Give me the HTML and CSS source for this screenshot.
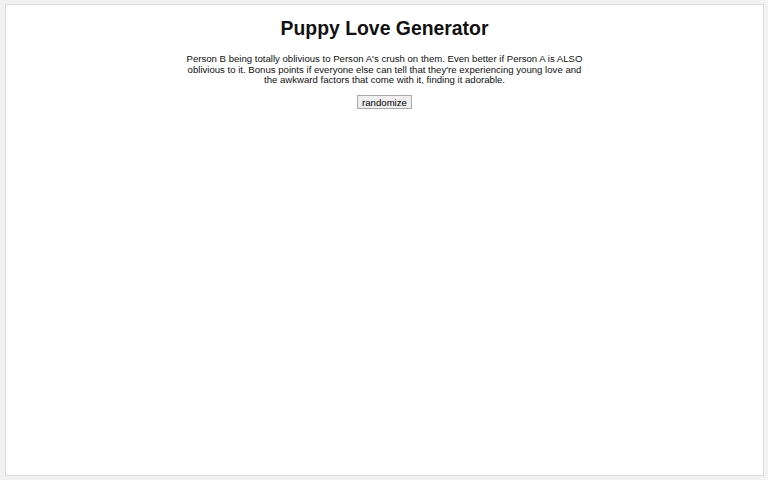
FILE: index.html
```html
<!DOCTYPE html>
<html lang="en">
<head>
    <meta charset="UTF-8">
    <meta name="viewport" content="width=device-width, initial-scale=1.0">
    <title>Puppy Love Generator</title>
    <link rel="stylesheet" href="styles.css">
</head>
<body>
    <div class="page">
        <h1>Puppy Love Generator</h1>
        <p id="prompt" class="prompt">Person B being totally oblivious to Person A's crush on them. Even better if Person A is ALSO oblivious to it. Bonus points if everyone else can tell that they're experiencing young love and the awkward factors that come with it, finding it adorable.</p>
        <button class="randomize">randomize</button>
    </div>
</body>
</html>
```

FILE: styles.css
```css
body {
    margin: 0;
    padding: 4px 4px 4px 5px;
    background-color: #f2f2f2;
    font-family: "Liberation Sans", Arial, sans-serif;
}
.page {
    height: 470px;
    background-color: #fff;
    border: 1px solid #dcdcdc;
    text-align: center;
}
h1 {
    margin: 12px 0 14px;
    font-size: 19.4px;
    color: #111;
}
.prompt {
    max-width: 400px;
    margin: 0 auto 6px;
    font-size: 9.6px;
    line-height: 10.5px;
    color: #111;
}
.randomize {
    font-family: "Liberation Sans", Arial, sans-serif;
    font-size: 9.6px;
    padding: 1px 4px 0;
    border: 1px solid #aaa;
    background-color: #eee;
    border-radius: 0;
}
```
